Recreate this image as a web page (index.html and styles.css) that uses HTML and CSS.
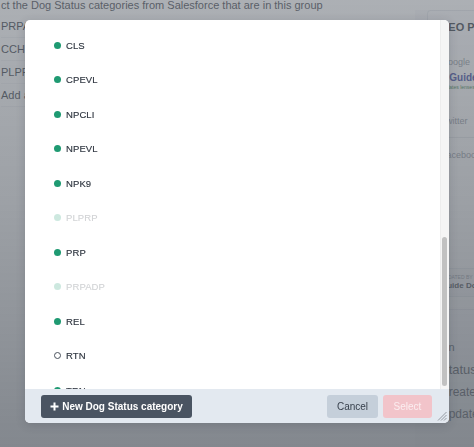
FILE: index.html
```html
<!DOCTYPE html>
<html>
<head>
<meta charset="utf-8">
<link rel="stylesheet" href="styles.css">
</head>
<body>
<div class="page">
  <p class="intro">ct the Dog Status categories from Salesforce that are in this group</p>
  <div class="cols">
    <div class="left">
      <div class="prow">PRPA</div>
      <div class="prow">CCH</div>
      <div class="prow">PLPRP</div>
      <div class="prow">Add a category</div>
    </div>
    <aside class="side">
      <div class="card">
        <h4 class="card-title">SEO Preview</h4>
        <div class="lbl lbl-google">Google</div>
        <div class="g-title"><span class="g-pre">s</span> Guide Dogs</div>
        <div class="g-url">updates lenses dogs</div>
        <div class="lbl lbl-twitter">Twitter</div>
        <div class="rule"></div>
        <div class="lbl lbl-fb">Facebook</div>
        <div class="upd">
          <div class="upd-k">UPDATED BY</div>
          <div class="upd-v">Guide Dogs</div>
        </div>
      </div>
      <div class="meta">
        <div class="meta-a">On</div>
        <div class="meta-s">Status</div>
        <div class="meta-c">Created</div>
        <div class="meta-c">Updated</div>
      </div>
    </aside>
  </div>
</div>

<div class="overlay"></div>

<div class="modal">
  <div class="modal-body">
    <ul class="list">
      <li class="item"><span class="dot"></span>CLS</li>
      <li class="item"><span class="dot"></span>CPEVL</li>
      <li class="item"><span class="dot"></span>NPCLI</li>
      <li class="item"><span class="dot"></span>NPEVL</li>
      <li class="item"><span class="dot"></span>NPK9</li>
      <li class="item faded"><span class="dot"></span>PLPRP</li>
      <li class="item"><span class="dot"></span>PRP</li>
      <li class="item faded"><span class="dot"></span>PRPADP</li>
      <li class="item"><span class="dot"></span>REL</li>
      <li class="item"><span class="dot hollow"></span>RTN</li>
      <li class="item"><span class="dot"></span>TRN</li>
    </ul>
    <div class="scrollbar"><div class="thumb"></div></div>
  </div>
  <div class="modal-foot">
    <button class="btn btn-new"><svg class="plus" width="9" height="9" viewBox="0 0 9 9"><path d="M4.5 0.5v8M0.5 4.5h8" stroke="#fff" stroke-width="2"/></svg>New Dog Status category</button>
    <div class="actions">
      <button class="btn btn-cancel">Cancel</button>
      <button class="btn btn-select">Select</button>
    </div>
  </div>
  <svg class="resize" width="10" height="10" viewBox="0 0 10 10"><path d="M9.5 1L1 9.5M9.5 4L4 9.5M9.5 7L7 9.5" stroke="#8a9097" stroke-width="0.9"/></svg>
</div>
</body>
</html>
```

FILE: styles.css
```css
* { box-sizing: border-box; }
html, body { margin: 0; padding: 0; }
body {
  width: 474px;
  height: 447px;
  overflow: hidden;
  background: #ffffff;
  font-family: "Liberation Sans", Arial, sans-serif;
  color: #2f3640;
}
.page { width: 474px; height: 447px; overflow: hidden; }
.intro {
  margin: 0;
  font-size: 11px;
  line-height: 11px;
  color: #3a4048;
  white-space: nowrap;
  padding-left: 1px;
}
.cols {
  display: flex;
  margin-top: 4px;
}
.left {
  flex: none;
  width: 415px;
  padding-left: 1px;
}
.prow {
  height: 23px;
  line-height: 23px;
  font-size: 11px;
  color: #2c323b;
  border-bottom: 1px solid #f1f2f4;
  white-space: nowrap;
}
.side {
  flex: 1;
  min-width: 0;
  padding: 0 0 0 12px;
  margin-top: -5px;
  background: #f7f8fa;
  height: 452px;
}
.card {
  border: 1px solid #e4e7eb;
  border-right: 0;
  border-radius: 4px 0 0 4px;
  padding: 9px 0 0 13px;
  height: 300px;
  background: #fbfbfc;
  white-space: nowrap;
  overflow: hidden;
}
.card-title {
  margin: 0;
  font-size: 11px;
  line-height: 14px;
  font-weight: 700;
  color: #2b3139;
}
.lbl {
  font-size: 9px;
  line-height: 12px;
  color: #8a9099;
}
.lbl-google { margin-top: 22px; }
.g-title {
  margin-top: 4px;
  font-size: 10px;
  line-height: 12px;
  font-weight: 700;
  color: #2c3a9c;
}
.g-pre { color: #b07f10; }
.g-url {
  font-size: 5px;
  line-height: 7px;
  color: #2d7a3b;
}
.lbl-twitter { margin-top: 24px; }
.rule {
  margin: 10px 0 0 -13px;
  border-top: 1px solid #e3e6ea;
}
.lbl-fb { margin-top: 11px; }
.upd {
  margin: 107px 0 0 -6px;
  border: 1px solid #e3e6ea;
  border-right: 0;
  padding: 4px 0 5px 5px;
  background: #f3f4f6;
}
.upd-k {
  font-size: 5px;
  line-height: 8px;
  color: #8a9099;
}
.upd-v {
  font-size: 8px;
  line-height: 10px;
  font-weight: 700;
  color: #2b3139;
}
.meta {
  padding-left: 13px;
  margin-top: 30px;
  white-space: nowrap;
}
.meta-a { font-size: 11px; line-height: 14px; color: #2f3640; }
.meta-s { font-size: 13px; line-height: 16px; margin-top: 8px; color: #2f3640; }
.meta-c { font-size: 12px; line-height: 16px; margin-top: 6px; color: #2f3640; }

.overlay {
  position: fixed;
  inset: 0;
  background: linear-gradient(180deg, rgba(112,118,126,0.58) 0%, rgba(106,112,120,0.66) 45%, rgba(100,106,114,0.8) 100%);
}

.modal {
  position: absolute;
  left: 25px;
  top: 20px;
  width: 424px;
  height: 403px;
  background: #ffffff;
  border-radius: 5px;
  overflow: hidden;
  display: flex;
  flex-direction: column;
  box-shadow: 0 2px 10px rgba(40, 45, 55, 0.18);
}
.modal-body {
  flex: 1;
  min-height: 0;
  display: flex;
}
.list {
  flex: 1;
  list-style: none;
  margin: 0;
  padding: 8px 0 0 29px;
  overflow: hidden;
}
.item {
  height: 34.5px;
  display: flex;
  align-items: center;
  font-size: 9.5px;
  color: #2f3640;
  letter-spacing: 0.1px;
  -webkit-text-stroke: 0.15px #2f3640;
}
.item.faded { opacity: 0.22; }
.dot {
  width: 7px;
  height: 7px;
  border-radius: 50%;
  background: #1f9a72;
  margin-right: 5px;
  flex: none;
}
.dot.hollow {
  background: #fff;
  border: 1px solid #4a525d;
}
.scrollbar {
  width: 9px;
  background: #f5f5f5;
  border-left: 1px solid #ededed;
  padding: 217px 0 0 1px;
}
.thumb {
  width: 5px;
  height: 149px;
  border-radius: 3px;
  background: #c1c1c1;
}
.modal-foot {
  height: 34px;
  flex: none;
  background: #e3e9f0;
  display: flex;
  align-items: center;
  justify-content: space-between;
  padding: 0 17px 0 16px;
}
.btn {
  height: 23px;
  border: 0;
  border-radius: 3px;
  font-family: "Liberation Sans", Arial, sans-serif;
  font-size: 10px;
  padding: 0;
  display: flex;
  align-items: center;
  justify-content: center;
}
.btn-new {
  background: #4a5462;
  color: #ffffff;
  font-weight: 700;
  width: 151px;
  gap: 3px;
}
.plus { flex: none; }
.actions { display: flex; gap: 5px; }
.btn-cancel {
  width: 51px;
  background: #c5cfda;
  color: #37404c;
  font-weight: 500;
}
.btn-select {
  width: 49px;
  background: #f2c4ca;
  color: #fbeef0;
  font-weight: 500;
}
.resize {
  position: absolute;
  right: 2px;
  bottom: 2px;
}
```
